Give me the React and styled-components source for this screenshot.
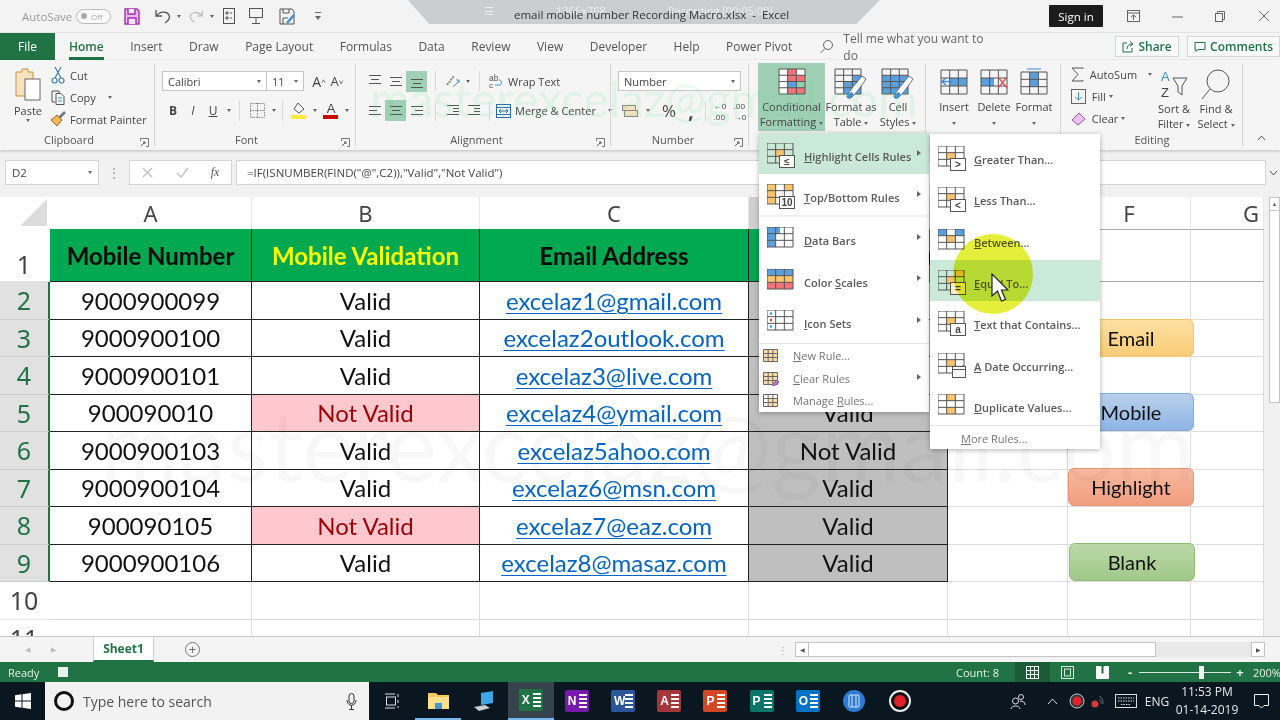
import React from 'react'
import styled, { createGlobalStyle } from 'styled-components'

const UI = `"Open Sans", "Liberation Sans", sans-serif`
const CELL = `Lato, "Liberation Sans", sans-serif`

const GlobalStyle = createGlobalStyle`
  html, body { margin: 0; padding: 0; background: #fff; }
  body { font-family: ${UI}; color: #444; overflow: hidden; }
  * { box-sizing: border-box; }
`

// ---- little drawings ----

const Grid = ({ w = 26, h = 20, cols = 3, rows = 3, fills = [], stroke = '#555', x = 0, y = 0 }) => {
  const lines = []
  for (let i = 0; i <= cols; i++) lines.push(<line key={'c' + i} x1={x + (w * i) / cols} x2={x + (w * i) / cols} y1={y} y2={y + h} />)
  for (let i = 0; i <= rows; i++) lines.push(<line key={'r' + i} y1={y + (h * i) / rows} y2={y + (h * i) / rows} x1={x} x2={x + w} />)
  return (
    <g stroke={stroke} strokeWidth="1">
      {fills.map((f, i) => (
        <rect key={i} x={x + (w * f[0]) / cols} y={y + (h * f[1]) / rows} width={(w * f[2]) / cols} height={(h * f[3]) / rows} fill={f[4]} stroke="none" />
      ))}
      {lines}
    </g>
  )
}

const OR = '#fbc56d'
const BL = '#5b9fdc'
const PK = '#f2727a'

const MenuGlyph = ({ fills, badge, date }) => (
  <svg width="30" height="29" viewBox="0 0 30 29" fill="none">
    <Grid fills={fills} />
    {badge && <rect x="12.5" y="12.5" width="15" height="12" fill={badge.bg || '#fff'} stroke="#555" />}
    {badge && <text x="20" y="22" textAnchor="middle" fontSize="10" fontFamily="Liberation Sans" fill="#444">{badge.t}</text>}
    {date && <g stroke="#555"><rect x="14.5" y="13.5" width="13" height="11" fill="#fff" /><line x1="14.5" y1="16.5" x2="27.5" y2="16.5" /><line x1="17" y1="12" x2="17" y2="14" /><line x1="25" y1="12" x2="25" y2="14" /></g>}
  </svg>
)

const Tiny = ({ fills, extra }) => (
  <svg width="16" height="15" viewBox="0 0 16 15" fill="none">
    <Grid w={14} h={12} cols={3} rows={3} x={0.5} y={1.5} stroke="#666" fills={fills} />
    {extra}
  </svg>
)

const Brush = () => (
  <g>
    <path d="M13 28 C15 24 18 20 28 8 L32 11 C26 20 22 25 18 29 C16 31 13 30 13 28 Z" fill="#fff" stroke="#5f6f80" />
    <path d="M13 28 C15 25 17 24 18 24 L20 27 L17 30 C15 31 12 31 13 28 Z" fill="#3f8fd6" />
  </g>
)

const Lines = ({ rows }) => (
  <svg width="16" height="14" viewBox="0 0 16 14" stroke="#555" strokeWidth="1">
    {rows.map((r, i) => <line key={i} x1={r[0]} x2={r[1]} y1={r[2]} y2={r[2]} />)}
  </svg>
)

const Caret = styled.span`
  display: inline-block;
  width: 0;
  height: 0;
  border-left: 2.5px solid transparent;
  border-right: 2.5px solid transparent;
  border-top: 3px solid #666;
  margin-left: ${p => p.$ml || 0}px;
  vertical-align: middle;
`

const Launcher = () => (
  <svg width="9" height="9" viewBox="0 0 9 9" fill="none" stroke="#777">
    <path d="M.5 3V.5H8.5V8.5H6" />
    <path d="M1 8 5 4M3 4H5V6" stroke="#555" />
  </svg>
)

// ---- title bar ----

const TitleBar = styled.header`
  height: 32px;
  background: #f3f3f3;
  display: flex;
  align-items: center;
  position: relative;
  flex: none;
`
const AutoSave = styled.span`
  font-size: 11.5px;
  color: #9a9a9a;
  margin-left: 22px;
  width: 54px;
`
const Toggle = styled.span`
  width: 35px;
  height: 15px;
  border: 1px solid #bbb;
  border-radius: 8px;
  background: #fafafa;
  display: flex;
  align-items: center;
  gap: 4px;
  padding-left: 4px;
  font-size: 8px;
  color: #aaa;
  &::before { content: ''; width: 6px; height: 6px; border-radius: 50%; background: #aaa; }
`
const QuickSlot = styled.span`
  width: ${p => p.$w}px;
  display: flex;
  align-items: center;
  justify-content: center;
  flex: none;
`
const RecBar = styled.div`
  position: absolute;
  left: 408px;
  top: 0;
  width: 472px;
  height: 24px;
  background: #cbcdcf;
  clip-path: polygon(0 0, 100% 0, 95% 100%, 4.5% 100%);
  color: #ecedee;
  font-size: 11px;
  display: flex;
  align-items: flex-start;
  padding: 3px 0 0 76px;
  gap: 62px;
`
const DocTitle = styled.span`
  position: absolute;
  left: 514px;
  top: 7px;
  font-size: 11.5px;
  color: #333;
  white-space: nowrap;
`
const SignIn = styled.span`
  margin-left: auto;
  width: 54px;
  height: 22px;
  background: #1c1c1c;
  color: #fff;
  font-size: 11.5px;
  display: flex;
  align-items: center;
  justify-content: center;
  border-radius: 1px;
`
const WinBtn = styled.span`
  width: ${p => p.$w}px;
  display: flex;
  justify-content: center;
  flex: none;
`

// ---- tabs ----

const TabRow = styled.nav`
  height: 28px;
  background: #f5f5f5;
  display: flex;
  align-items: center;
  flex: none;
  border-top: 1px solid #e4e4e4;
`
const FileTab = styled.span`
  width: 55px;
  height: 100%;
  background: #217346;
  color: #fff;
  font-size: 12px;
  display: flex;
  align-items: center;
  justify-content: center;
`
const Tabs = styled.div`
  display: flex;
  gap: 26.5px;
  margin-left: 14px;
  height: 100%;
`
const Tab = styled.span`
  font-size: 12px;
  color: ${p => (p.$active ? '#217346' : '#555')};
  font-weight: ${p => (p.$active ? 600 : 400)};
  height: 100%;
  display: flex;
  align-items: center;
  white-space: nowrap;
  border-bottom: ${p => (p.$active ? '3px solid #217346' : 'none')};
  padding-top: ${p => (p.$active ? '3px' : 0)};
`
const TellMe = styled.span`
  margin-left: 27px;
  display: flex;
  align-items: center;
  gap: 9px;
  font-size: 12px;
  color: #666;
`
const PillBtn = styled.span`
  margin-left: ${p => p.$ml || 0}px;
  width: ${p => p.$w}px;
  height: 21px;
  border: 1px solid #cfd8d3;
  background: #fafafa;
  color: #217346;
  font-size: 12px;
  font-weight: 600;
  display: flex;
  align-items: center;
  justify-content: center;
  gap: 4px;
`

// ---- ribbon ----

const Ribbon = styled.section`
  height: 90px;
  background: #f5f5f5;
  display: flex;
  flex: none;
  position: relative;
  box-shadow: 0 1px 3px rgba(0, 0, 0, 0.22);
  z-index: 2;
`
const RibbonMark = styled.span`
  position: absolute;
  left: 370px;
  top: 10px;
  font: 400 48px ${CELL};
  color: rgba(90, 225, 130, 0.13);
  white-space: nowrap;
  pointer-events: none;
  z-index: 3;
`
const Group = styled.div`
  width: ${p => p.$w}px;
  flex: none;
  display: flex;
  flex-direction: column;
  position: relative;
  &::after {
    content: '';
    position: absolute;
    right: 0;
    top: 4px;
    bottom: 4px;
    width: 1px;
    background: #d6d6d6;
  }
`
const GroupBody = styled.div`
  flex: 1;
  display: flex;
  padding: ${p => p.$pad || '0'};
  min-height: 0;
`
const GroupLabel = styled.div`
  height: 18px;
  font-size: 11px;
  color: #555;
  text-align: center;
  flex: none;
  line-height: 16px;
  padding-right: ${p => p.$pr || 0}px;
`
const LaunchSpot = styled.span`
  position: absolute;
  right: 6px;
  bottom: 3px;
  line-height: 0;
`
const Stack = styled.div`
  display: flex;
  flex-direction: column;
  gap: ${p => p.$gap || 0}px;
`
const Row = styled.div`
  display: flex;
  align-items: center;
  height: ${p => p.$h || 21}px;
`
const PasteCol = styled.div`
  width: 42px;
  display: flex;
  flex-direction: column;
  align-items: center;
  font-size: 11px;
  padding-top: 2px;
  gap: 1px;
`
const MiniAction = styled.div`
  display: flex;
  align-items: center;
  height: 22px;
  font-size: 11px;
  color: #444;
  white-space: nowrap;
  gap: 3px;
`
const MiniIcon = styled.span`
  width: ${p => p.$w || 20}px;
  flex: none;
  display: flex;
  justify-content: center;
`
const SelectBox = styled.div`
  width: ${p => p.$w}px;
  height: 20px;
  background: #fff;
  border: 1px solid #c6c6c6;
  font-size: 11px;
  padding-left: 5px;
  display: flex;
  align-items: center;
  justify-content: space-between;
  padding-right: 5px;
  margin-left: -1px;
  color: #444;
`
const Slot = styled.span`
  width: ${p => p.$w || 20}px;
  height: 21px;
  flex: none;
  display: flex;
  align-items: center;
  justify-content: center;
  font-size: ${p => p.$fs || 12}px;
  font-weight: ${p => p.$fw || 400};
  font-style: ${p => (p.$it ? 'italic' : 'normal')};
  text-decoration: ${p => (p.$ul ? 'underline' : 'none')};
  background: ${p => (p.$on ? '#9fcfb4' : 'transparent')};
  color: #444;
`
const VBar = styled.span`
  width: 1px;
  height: 20px;
  background: #d8d8d8;
  margin: 0 ${p => p.$m || 4}px;
  flex: none;
`
const LargeBtn = styled.div`
  width: ${p => p.$w}px;
  height: 68px;
  flex: none;
  display: flex;
  flex-direction: column;
  align-items: center;
  background: ${p => (p.$on ? '#9fcfb4' : 'transparent')};
  font-size: 11px;
  line-height: 15px;
  color: #444;
  text-align: center;
  white-space: nowrap;
  padding-top: 5px;
  svg { flex: none; margin-bottom: 4px; }
`
const Collapse = styled.span`
  margin-left: auto;
  width: 37px;
  align-self: flex-end;
  padding-bottom: 9px;
  display: flex;
  justify-content: center;
`

// ---- formula bar ----

const FormulaWrap = styled.div`
  height: 47px;
  padding: 10px 0 12px 5px;
  background: #f1f1f1;
  display: flex;
  align-items: stretch;
  flex: none;
`
const NameBox = styled.div`
  width: 94px;
  background: #fff;
  border: 1px solid #d4d4d4;
  font-size: 11.5px;
  display: flex;
  align-items: center;
  justify-content: space-between;
  padding: 0 6px;
  color: #444;
`
const Dots = styled.span`
  width: 30px;
  display: flex;
  justify-content: center;
  align-items: center;
  color: #999;
  font-size: 12px;
  letter-spacing: 0;
`
const FxBox = styled.div`
  width: 103px;
  background: #fff;
  border: 1px solid #d4d4d4;
  display: flex;
  align-items: center;
  color: #bbb;
`
const FxSlot = styled.span`
  width: ${p => p.$w}px;
  display: flex;
  justify-content: center;
  font: italic 12px "Liberation Serif", serif;
  color: #555;
`
const FormulaInput = styled.div`
  margin-left: 4px;
  width: 1030px;
  background: #fff;
  border: 1px solid #d4d4d4;
  font-size: 11.5px;
  padding-left: 10px;
  display: flex;
  align-items: center;
  color: #444;
  white-space: nowrap;
`
const FormulaEnd = styled.span`
  flex: 1;
  display: flex;
  align-items: center;
  justify-content: center;
`

// ---- sheet ----

const SheetArea = styled.main`
  height: 439px;
  flex: none;
  display: flex;
  background: #fff;
  position: relative;
  overflow: hidden;
`
const SheetGrid = styled.div`
  width: 1264px;
  display: grid;
  grid-template-columns: 50px 202px 228px 269px 199px 120px 123px 73px;
  grid-template-rows: 32px 53px repeat(10, 37.5px);
  position: relative;
`
const Corner = styled.div`
  background: #fff;
  position: relative;
  &::after {
    content: '';
    position: absolute;
    left: 20px;
    top: 2px;
    width: 27px;
    height: 27px;
    background: #dcdcdc;
    clip-path: polygon(100% 0, 100% 100%, 0 100%);
  }
`
const ColHead = styled.div`
  font: 400 22px "Noto Sans", sans-serif;
  color: #444;
  background: ${p => (p.$sel ? '#d0d0d0' : '#fff')};
  display: flex;
  align-items: center;
  justify-content: center;
  border-right: 1px solid #e6e6e6;
`
const RowHead = styled.div`
  font: 400 25px "Noto Sans", sans-serif;
  color: ${p => (p.$sel ? '#217346' : '#444')};
  background: ${p => (p.$sel ? '#e1e1e1' : '#fff')};
  display: flex;
  align-items: ${p => (p.$low ? 'flex-end' : 'center')};
  justify-content: center;
  border-right: ${p => (p.$sel ? '2px solid #217346' : 'none')};
  border-bottom: 1px solid ${p => (p.$sel ? '#cfcfcf' : '#e6e6e6')};
  padding-right: ${p => (p.$sel ? '0' : '2px')};
`
const Cell = styled.div`
  font: 400 24px ${CELL};
  color: ${p => (p.$bad ? '#9c0006' : '#111')};
  background: ${p => (p.$bad ? '#ffc7ce' : p.$sel ? '#bfbfbf' : '#fff')};
  display: flex;
  align-items: center;
  justify-content: center;
  border-right: 1px solid #222;
  border-bottom: 1px solid #222;
  white-space: nowrap;
`
const HeadCell = styled(Cell)`
  font-weight: 700;
  background: #00a850;
  color: ${p => (p.$yellow ? '#ffff00' : '#0c0c0c')};
`
const MailLink = styled.span`
  color: #0563c1;
  text-decoration: underline;
  text-decoration-thickness: 1px;
  text-underline-offset: 3px;
`
const Blank = styled.div`
  border-right: 1px solid #dcdcdc;
  border-bottom: 1px solid ${p => (p.$dark ? '#aaa' : '#dcdcdc')};
  border-top: ${p => (p.$top ? '1px solid #aaa' : 'none')};
`
const Shape = styled.div`
  position: absolute;
  left: ${p => p.$x}px;
  top: ${p => p.$y}px;
  width: 126px;
  height: 38px;
  border-radius: 6px;
  border: 1px solid ${p => p.$line};
  background: linear-gradient(${p => p.$a}, ${p => p.$b});
  font: 400 20px ${CELL};
  color: #111;
  display: flex;
  align-items: center;
  justify-content: center;
`
const SheetMark = styled.span`
  position: absolute;
  left: 100px;
  top: 190px;
  font: 400 96px ${CELL};
  color: rgba(0, 0, 0, 0.028);
  white-space: nowrap;
  pointer-events: none;
`
const VScroll = styled.aside`
  width: 16px;
  flex: none;
  padding-left: 5px;
  display: flex;
  flex-direction: column;
  background: #f1f1f1;
`
const ScrollArrow = styled.span`
  height: 14px;
  background: #fff;
  border: 1px solid #c4c4c4;
  display: flex;
  align-items: center;
  justify-content: center;
  font-size: 6px;
  color: #666;
`
const VThumb = styled.span`
  height: 192px;
  background: #fff;
  border: 1px solid #c4c4c4;
  border-top: none;
`

// ---- conditional formatting menus ----

const Menu = styled.div`
  position: absolute;
  left: ${p => p.$x}px;
  top: ${p => p.$y}px;
  width: ${p => p.$w}px;
  height: ${p => p.$h}px;
  background: #fff;
  box-shadow: 0 1px 5px rgba(0, 0, 0, 0.3);
  z-index: 5;
  padding-top: ${p => p.$pt || 0}px;
`
const BigItem = styled.div`
  height: ${p => p.$h || 41.3}px;
  display: flex;
  align-items: center;
  padding: 6px 0 0 ${p => p.$pl}px;
  gap: ${p => p.$gap}px;
  font-size: 11px;
  font-weight: 600;
  color: #5a5a5a;
  white-space: nowrap;
  background: ${p => (p.$on ? '#cbe9d8' : 'transparent')};
  position: relative;
  border-bottom: ${p => (p.$line ? '2px solid #efefef' : 'none')};
  svg { flex: none; margin-top: 2px; }
`
const SmallItem = styled.div`
  height: 22.6px;
  display: flex;
  align-items: center;
  padding-left: 4px;
  gap: 14px;
  font-size: 11px;
  color: #757575;
  position: relative;
`
const Arrow = styled.span`
  position: absolute;
  right: 8px;
  top: 50%;
  margin-top: -4px;
  width: 0;
  height: 0;
  border-top: 3.5px solid transparent;
  border-bottom: 3.5px solid transparent;
  border-left: 4px solid #666;
`
const MenuRule = styled.div`
  height: 1px;
  background: #e6e6e6;
  margin: ${p => p.$m || '0'};
`
const MoreRules = styled.div`
  font-size: 11px;
  color: #757575;
  padding: 5px 0 0 31px;
`
const Spot = styled.div`
  position: absolute;
  left: 953px;
  top: 234px;
  width: 80px;
  height: 80px;
  border-radius: 50%;
  background: #e6ee3c;
  mix-blend-mode: multiply;
  z-index: 6;
  pointer-events: none;
`
const Pointer = styled.svg`
  position: absolute;
  left: 991px;
  top: 273px;
  z-index: 7;
`

// ---- sheet tabs / status / taskbar ----

const SheetTabs = styled.div`
  height: 26px;
  flex: none;
  background: #f4f4f4;
  border-top: 1px solid #c8c8c8;
  display: flex;
  align-items: center;
`
const NavArrow = styled.span`
  width: 26px;
  color: #bbb;
  font-size: 7px;
  text-align: center;
  margin-left: ${p => p.$ml || 0}px;
`
const SheetTab = styled.span`
  width: 61px;
  height: 100%;
  margin-left: 27px;
  background: #fff;
  color: #217346;
  font-size: 12px;
  font-weight: 700;
  display: flex;
  align-items: center;
  justify-content: center;
  border-left: 1px solid #ccc;
  border-right: 1px solid #ccc;
  border-bottom: 2px solid #217346;
  margin-top: -1px;
`
const AddSheet = styled.span`
  margin-left: 31px;
  width: 15px;
  height: 15px;
  border: 1px solid #777;
  border-radius: 50%;
  display: flex;
  align-items: center;
  justify-content: center;
  font-size: 13px;
  line-height: 1;
  color: #666;
`
const HScrollWrap = styled.div`
  margin-left: auto;
  width: 510px;
  display: flex;
  align-items: center;
  height: 15px;
  padding-right: 15px;
`
const Grip = styled.span`
  width: 25px;
  color: #aaa;
  text-align: center;
  font-size: 10px;
`
const HTrack = styled.div`
  flex: 1;
  height: 15px;
  display: flex;
  background: #e9e9e9;
`
const HBtn = styled.span`
  width: 14px;
  height: 15px;
  background: #fff;
  border: 1px solid #c4c4c4;
  font-size: 6px;
  color: #555;
  display: flex;
  align-items: center;
  justify-content: center;
  flex: none;
`
const HThumb = styled.span`
  width: 347px;
  background: #fff;
  border: 1px solid #c4c4c4;
  border-left: none;
`
const HRest = styled.span`
  flex: 1;
`
const StatusBar = styled.footer`
  height: 20px;
  flex: none;
  background: #217346;
  color: #e6efe9;
  font-size: 11px;
  display: flex;
  align-items: center;
  padding-left: 8px;
`
const MacroBox = styled.span`
  width: 10px;
  height: 10px;
  background: #e8f1ec;
  margin-left: 19px;
`
const CountText = styled.span`
  margin-left: auto;
  margin-right: 16px;
`
const ViewBtn = styled.span`
  width: ${p => p.$w || 35}px;
  height: 100%;
  display: flex;
  align-items: center;
  justify-content: center;
  background: ${p => (p.$on ? '#1a5c38' : 'transparent')};
`
const ZoomSlider = styled.span`
  width: 92px;
  height: 1px;
  background: #dfe9e3;
  position: relative;
  margin: 0 5px;
  &::before {
    content: '';
    position: absolute;
    left: 60px;
    top: -6px;
    width: 5px;
    height: 13px;
    background: #eef4f0;
  }
`
const ZoomSign = styled.span`
  width: 8px;
  text-align: center;
  font-size: 13px;
  font-weight: 700;
  line-height: 1;
`
const ZoomVal = styled.span`
  width: 27px;
  margin-left: 9px;
  white-space: nowrap;
`
const Taskbar = styled.div`
  height: 38px;
  flex: none;
  background: #0a1721;
  display: flex;
  align-items: center;
  color: #e8e8e8;
`
const StartBtn = styled.span`
  width: 45px;
  display: flex;
  justify-content: center;
`
const SearchBox = styled.div`
  width: 324px;
  height: 100%;
  background: #f2f2f2;
  display: flex;
  align-items: center;
  padding: 0 12px 0 9px;
  font-size: 14px;
  color: #555;
`
const Cortana = styled.span`
  width: 20px;
  height: 20px;
  border: 3px solid #111;
  border-radius: 50%;
  margin-right: 9px;
  flex: none;
`
const TaskSlot = styled.span`
  width: 46.2px;
  height: 100%;
  flex: none;
  display: flex;
  align-items: center;
  justify-content: center;
  background: ${p => (p.$active ? '#37434c' : 'transparent')};
  border-bottom: ${p => (p.$open ? '2px solid #76b9ed' : 'none')};
`
const AppTile = styled.span`
  width: 24px;
  height: 22px;
  border-radius: 2px;
  display: flex;
  background: ${p => p.$bg};
  overflow: hidden;
  font: 700 12px "Liberation Sans", sans-serif;
  color: #fff;
  align-items: center;
  padding-left: 3px;
  position: relative;
  &::after {
    content: '';
    position: absolute;
    right: 2px;
    top: 4px;
    width: 8px;
    height: 14px;
    background: repeating-linear-gradient(#fff 0 2px, ${p => p.$bg} 2px 4px);
  }
`
const Tray = styled.div`
  margin-left: auto;
  display: flex;
  align-items: center;
  height: 100%;
`
const TraySlot = styled.span`
  width: ${p => p.$w}px;
  flex: none;
  display: flex;
  justify-content: center;
  align-items: center;
  font-size: ${p => p.$fs || 12}px;
`
const Clock = styled.span`
  width: 70px;
  flex: none;
  text-align: center;
  font-size: 12px;
  line-height: 18px;
`

const Root = styled.div`
  width: 1280px;
  height: 720px;
  display: flex;
  flex-direction: column;
  overflow: hidden;
  position: relative;
`

// ---- data ----

const rows = [
  ['9000900099', 'Valid', 'excelaz1@gmail.com', 'Valid'],
  ['9000900100', 'Valid', 'excelaz2outlook.com', 'Not Valid'],
  ['9000900101', 'Valid', 'excelaz3@live.com', 'Valid'],
  ['900090010', 'Not Valid', 'excelaz4@ymail.com', 'Valid'],
  ['9000900103', 'Valid', 'excelaz5ahoo.com', 'Not Valid'],
  ['9000900104', 'Valid', 'excelaz6@msn.com', 'Valid'],
  ['900090105', 'Not Valid', 'excelaz7@eaz.com', 'Valid'],
  ['9000900106', 'Valid', 'excelaz8@masaz.com', 'Valid'],
]

const shapes = [
  { t: 'Email', x: 1068, y: 122, a: '#fde0a4', b: '#fbcc77', line: '#f3c46a' },
  { t: 'Mobile', x: 1068, y: 196, a: '#b9d0ee', b: '#8fb4e3', line: '#84a9d8' },
  { t: 'Highlight', x: 1068, y: 271, a: '#f8b9a0', b: '#f29e80', line: '#ea9477' },
  { t: 'Blank', x: 1069, y: 346, a: '#b9d8a6', b: '#a1c88a', line: '#8cbb73' },
]

const leftMenu = [
  { l: <><u>H</u>ighlight Cells Rules</>, on: true, f: [[1, 1, 1, 1, OR], [2, 0, 0, 0, OR]], b: { t: '≤' } },
  { l: <><u>T</u>op/Bottom Rules</>, line: true, f: [[0, 0, 1, 3, OR], [2, 0, 1, 1, OR]], b: { t: '10' } },
  { l: <><u>D</u>ata Bars</>, f: [[0, 0, 1, 3, BL], [1, 0, 0.5, 1, BL]] },
  { l: <>Color <u>S</u>cales</>, f: [[0, 0, 3, 1, BL], [0, 1, 3, 1, OR], [0, 2, 3, 1, PK]] },
  { l: <><u>I</u>con Sets</>, icons: true, f: [] },
]

const rightMenu = [
  { l: <><u>G</u>reater Than...</>, f: [[1, 1, 1, 1, OR]], b: { t: '>' } },
  { l: <><u>L</u>ess Than...</>, f: [[1, 1, 1, 1, OR]], b: { t: '<' } },
  { l: <><u>B</u>etween...</>, f: [[0, 0, 1, 1, BL], [2, 0, 1, 1, BL], [1, 1, 1, 1, OR]] },
  { l: <><u>E</u>qual To...</>, on: true, f: [[1, 1, 1, 1, OR], [2, 0, 1, 1, OR]], b: { t: '=', bg: '#f9edc6' } },
  { l: <><u>T</u>ext that Contains...</>, f: [[1, 1, 1, 1, OR]], b: { t: 'a' } },
  { l: <><u>A</u> Date Occurring...</>, f: [[1, 1, 1, 1, OR]], date: true },
  { l: <><u>D</u>uplicate Values...</>, f: [[1, 0, 1, 1, OR], [1, 2, 1, 1, OR]] },
]

const tabs = ['Insert', 'Draw', 'Page Layout', 'Formulas', 'Data', 'Review', 'View', 'Developer', 'Help', 'Power Pivot']

const tiles = [
  ['#7719aa', 'N'], ['#2b579a', 'W'], ['#a4373a', 'A'], ['#d24726', 'P'], ['#077568', 'P'], ['#0072c6', 'O'],
]

const App = () => {
  return (
    <Root>
      <GlobalStyle />

      <TitleBar>
        <AutoSave>AutoSave</AutoSave>
        <Toggle>Off</Toggle>
        <QuickSlot $w="42px" style={{ width: 42 }}>
          <svg width="16" height="17" viewBox="0 0 16 17" fill="#e9b6ee" stroke="#a12fb0" strokeWidth="1.4">
            <path d="M1 1H13L15 3V16H1Z" />
            <path d="M4 1V6H11V1M4 16V10H12V16" fill="#f6e3f8" />
          </svg>
        </QuickSlot>
        <QuickSlot $w={20}>
          <svg width="18" height="16" viewBox="0 0 18 16" fill="none" stroke="#555" strokeWidth="1.3"><path d="M2 2V8H8M2 8C6 3 13 3 15 7 16.500 10 14 13 11 15" /></svg>
        </QuickSlot>
        <QuickSlot $w={12}><Caret /></QuickSlot>
        <QuickSlot $w={22}>
          <svg width="16" height="16" viewBox="0 0 18 16" fill="none" stroke="#bbb" strokeWidth="1.3"><path d="M16 2V8H10M16 8C12 3 5 3 3 7 1.500 10 4 13 7 15" /></svg>
        </QuickSlot>
        <QuickSlot $w={10}><Caret /></QuickSlot>
        <QuickSlot $w={24}>
          <svg width="12" height="16" viewBox="0 0 12 16" fill="none" stroke="#555"><rect x=".5" y=".5" width="11" height="15" /><path d="M3 4H5V6H3ZM3 9H5V11H3ZM7 5H9M7 10H9" /></svg>
        </QuickSlot>
        <QuickSlot $w={30}>
          <svg width="16" height="17" viewBox="0 0 16 17" fill="none" stroke="#555"><rect x="1.500" y=".5" width="13" height="9" /><path d="M8 10V15M4 15.500H12" /></svg>
        </QuickSlot>
        <QuickSlot $w={32}>
          <svg width="17" height="17" viewBox="0 0 17 17" fill="none" stroke="#555"><path d="M1 1H13L15 3V16H1Z" /><path d="M4 1V5H10V1M4 16V10H9" /><path d="M8 15 15 7" stroke="#3f8fd6" strokeWidth="2.5" /></svg>
        </QuickSlot>
        <QuickSlot $w={30}>
          <svg width="8" height="9" viewBox="0 0 8 9" fill="#666"><rect x="1" y="0" width="6" height="1" /><path d="M1 4H7L4 8Z" /></svg>
        </QuickSlot>
        <RecBar><span>☰</span><span>1366x768</span><span>Recording [00:05:00]</span></RecBar>
        <DocTitle>email mobile number Recording Macro.xlsx&nbsp; -&nbsp; Excel</DocTitle>
        <SignIn>Sign in</SignIn>
        <WinBtn $w={60}>
          <svg width="13" height="12" viewBox="0 0 13 12" fill="none" stroke="#666"><rect x=".5" y=".5" width="12" height="11" /><path d="M.5 3H12.500M6.500 10V5M4 7 6.500 5 9 7" /></svg>
        </WinBtn>
        <WinBtn $w={29}><svg width="11" height="11"><line x1="0" x2="11" y1="6" y2="6" stroke="#666" /></svg></WinBtn>
        <WinBtn $w={55}><svg width="10" height="11" viewBox="0 0 10 11" fill="none" stroke="#666"><rect x=".5" y="2.500" width="7" height="8" /><path d="M2.500 2.500V.5H9.500V8.500H7.500" /></svg></WinBtn>
        <WinBtn $w={33}><svg width="12" height="12" stroke="#666"><path d="M1 1 11 11M11 1 1 11" /></svg></WinBtn>
      </TitleBar>

      <TabRow>
        <FileTab>File</FileTab>
        <Tabs>
          <Tab $active>Home</Tab>
          {tabs.map(t => <Tab key={t}>{t}</Tab>)}
        </Tabs>
        <TellMe>
          <svg width="15" height="15" viewBox="0 0 15 15" fill="none" stroke="#666"><circle cx="9" cy="6" r="4.500" /><path d="M6 9.500 1.500 14" /></svg>
          Tell me what you want to do
        </TellMe>
        <PillBtn $ml={114} $w={64}>
          <svg width="12" height="12" viewBox="0 0 12 12" fill="none" stroke="#217346"><path d="M5 2H1V11H10V7M5 8C5 5 7 3 10 3M8 .5 11 3 8 5.500" /></svg>
          Share
        </PillBtn>
        <PillBtn $ml={8} $w={93}>
          <svg width="12" height="12" viewBox="0 0 12 12" fill="none" stroke="#217346"><path d="M1 1.500H11V8.500H4L2 10.500V8.500H1Z" /></svg>
          Comments
        </PillBtn>
      </TabRow>

      <Ribbon>
        <RibbonMark>masterexcelaz@gmail.com</RibbonMark>

        <Group $w={155}>
          <GroupBody $pad="4px 0 0 7px">
            <PasteCol>
              <svg width="28" height="36" viewBox="0 0 28 36" fill="none">
                <path d="M2 6H8V3H14V6H19V30H2Z" fill="#f6e2bd" stroke="#c9923a" />
                <rect x="11" y="13" width="15" height="21" fill="#fff" stroke="#666" />
              </svg>
              <span>Paste</span>
              <Caret />
            </PasteCol>
            <Stack style={{ marginLeft: 0 }}>
              <MiniAction>
                <MiniIcon $w={18}><svg width="14" height="18" viewBox="0 0 14 18" fill="none" stroke="#3f7fb5" strokeWidth="1.200"><path d="M4 1 10 12M10 1 4 12" /><circle cx="3.500" cy="14.500" r="2.500" /><circle cx="10.500" cy="14.500" r="2.500" /></svg></MiniIcon>
                Cut
              </MiniAction>
              <MiniAction>
                <MiniIcon $w={18}><svg width="15" height="15" viewBox="0 0 15 15" fill="none" stroke="#555"><path d="M4 12H1V1H8V3" /><path d="M5 3.500H10L13 6.500V14.500H5Z" /><path d="M7 8H11M7 11H11" stroke="#3f8fd6" /></svg></MiniIcon>
                Copy <Caret $ml={9} />
              </MiniAction>
              <MiniAction>
                <MiniIcon $w={18}><svg width="16" height="16" viewBox="0 0 16 16" fill="none"><path d="M15 1 9 7" stroke="#6a7784" strokeWidth="2.500" /><path d="M7 4 12 9 7 15 1 9Z" fill="#f0b65a" stroke="#99682a" /></svg></MiniIcon>
                Format Painter
              </MiniAction>
            </Stack>
          </GroupBody>
          <GroupLabel $pr={17}>Clipboard</GroupLabel>
          <LaunchSpot><Launcher /></LaunchSpot>
        </Group>

        <Group $w={201}>
          <GroupBody $pad="11px 0 0 8px">
            <Stack $gap={9}>
              <Row $h={20}>
                <SelectBox $w={105}>Calibri <Caret /></SelectBox>
                <SelectBox $w={38}>11 <Caret /></SelectBox>
                <Slot $w={18} $fs={14} style={{ marginLeft: 6 }}>A<sup style={{ fontSize: 8 }}>^</sup></Slot>
                <Slot $w={18} $fs={13}>A<sup style={{ fontSize: 8 }}>˅</sup></Slot>
              </Row>
              <Row>
                <Slot $w={20} $fw={700}>B</Slot>
                <Slot $w={20} $it>I</Slot>
                <Slot $w={20} $ul>U</Slot>
                <Slot $w={12}><Caret /></Slot>
                <VBar $m={4} />
                <Slot $w={26}><svg width="15" height="15" stroke="#888" strokeDasharray="1.500 1" fill="none"><rect x=".5" y=".5" width="14" height="14" /><path d="M7.500 0V15M0 7.500H15" /></svg></Slot>
                <Slot $w={8}><Caret /></Slot>
                <VBar $m={4} />
                <Slot $w={24}><svg width="16" height="17" viewBox="0 0 16 17" fill="none"><path d="M7 1 13 7 8 11 3 7Z" stroke="#555" /><rect x="0" y="13" width="15" height="4" fill="#ffeb3b" /></svg></Slot>
                <Slot $w={8}><Caret /></Slot>
                <Slot $w={24}><svg width="16" height="17" viewBox="0 0 16 17"><text x="8" y="11" fontSize="13" textAnchor="middle" fill="#444" fontFamily="Liberation Sans">A</text><rect x="0" y="13" width="15" height="4" fill="#c00" /></svg></Slot>
                <Slot $w={8}><Caret /></Slot>
              </Row>
            </Stack>
          </GroupBody>
          <GroupLabel $pr={18}>Font</GroupLabel>
          <LaunchSpot><Launcher /></LaunchSpot>
        </Group>

        <Group $w={255}>
          <GroupBody $pad="11px 0 0 8px">
            <Stack $gap={9}>
              <Row $h={20}>
                <Slot $w={21}><Lines rows={[[2, 14, 1.500], [4, 12, 5.500], [2, 14, 9.500]]} /></Slot>
                <Slot $w={21}><Lines rows={[[2, 14, 3.500], [4, 12, 7.500], [2, 14, 11.500]]} /></Slot>
                <Slot $w={21} $on><Lines rows={[[2, 14, 5.500], [4, 12, 9.500], [2, 14, 13.500]]} /></Slot>
                <VBar $m={8} />
                <Slot $w={20} $fs={11} style={{ marginLeft: -1 }}>
                  <svg width="16" height="16" viewBox="0 0 16 16" fill="none"><path d="M2 12 9 3" stroke="#888" strokeDasharray="2 1" strokeWidth="2" /><path d="M8 14 14 8M11 7H14V10" stroke="#3f8fd6" /></svg>
                </Slot>
                <Slot $w={9}><Caret /></Slot>
                <VBar $m={7} />
                <MiniIcon $w={18}><svg width="16" height="16" viewBox="0 0 16 16"><text x="1" y="8" fontSize="8.500" fill="#555" fontFamily="Liberation Sans">ab</text><text x="1" y="15" fontSize="8" fill="#555" fontFamily="Liberation Sans">c</text><path d="M7 12H12C14 12 14 7 11 7" stroke="#3f8fd6" fill="none" /></svg></MiniIcon>
                <MiniAction style={{ marginLeft: 3 }}>Wrap Text</MiniAction>
              </Row>
              <Row>
                <Slot $w={21}><Lines rows={[[2, 14, 2.500], [2, 10, 6.500], [2, 14, 10.500]]} /></Slot>
                <Slot $w={21} $on><Lines rows={[[2, 14, 2.500], [4, 12, 6.500], [2, 14, 10.500]]} /></Slot>
                <Slot $w={21}><Lines rows={[[2, 14, 2.500], [6, 14, 6.500], [2, 14, 10.500]]} /></Slot>
                <VBar $m={8} />
                <Slot $w={20} style={{ marginLeft: -1 }}><Lines rows={[[2, 14, 1.500], [8, 14, 4.500], [8, 14, 7.500], [2, 14, 10.500]]} /></Slot>
                <Slot $w={22}><Lines rows={[[2, 14, 1.500], [8, 14, 4.500], [8, 14, 7.500], [2, 14, 10.500]]} /></Slot>
                <VBar $m={4} />
                <MiniIcon $w={18}><svg width="15" height="14" viewBox="0 0 15 14" fill="none" stroke="#2b6ea6"><rect x=".5" y=".5" width="14" height="13" /><path d="M0 3.500H15M0 10.500H15M3 7H12M5 5 3 7 5 9M10 5 12 7 10 9" /></svg></MiniIcon>
                <MiniAction style={{ marginLeft: 3 }}>Merge &amp; Center <Caret $ml={9} /></MiniAction>
              </Row>
            </Stack>
          </GroupBody>
          <GroupLabel $pr={14}>Alignment</GroupLabel>
          <LaunchSpot><Launcher /></LaunchSpot>
        </Group>

        <Group $w={138}>
          <GroupBody $pad="11px 0 0 8px">
            <Stack $gap={9}>
              <Row $h={20}>
                <SelectBox $w={123}>Number <Caret /></SelectBox>
              </Row>
              <Row>
                <Slot $w={22}><svg width="16" height="14" viewBox="0 0 16 14" fill="#f6e2bd" stroke="#888"><rect x=".5" y="1.500" width="13" height="5" /><rect x="2.500" y="6.500" width="13" height="6" /></svg></Slot>
                <Slot $w={14}><Caret /></Slot>
                <Slot $w={24} $fs={17} style={{ marginLeft: 2 }}>%</Slot>
                <Slot $w={20} $fs={19} $fw={700}>,</Slot>
                <VBar $m={4} />
                <Slot $w={20} $fs={8}>←0<br />.00</Slot>
                <Slot $w={20} $fs={8}>.00<br />→0</Slot>
              </Row>
            </Stack>
          </GroupBody>
          <GroupLabel $pr={14}>Number</GroupLabel>
          <LaunchSpot><Launcher /></LaunchSpot>
        </Group>

        <Group $w={177}>
          <GroupBody $pad="3px 0 0 9px">
            <LargeBtn $w={67} $on>
              <svg width="28" height="27" viewBox="0 0 28 27" fill="#fff"><Grid w={26} h={25} cols={3} rows={4} x={1} y={1} stroke="#555" fills={[[0, 0, 3, 1, '#fff'], [1, 0, 1, 1, PK], [0, 0, 1, 4, '#fff'], [1, 1, 2, 1, PK], [1, 2, 1, 1, BL], [1, 3, 2, 1, PK]]} /></svg>
              <span>Conditional</span>
              <span>Formatting <Caret /></span>
            </LargeBtn>
            <LargeBtn $w={52}>
              <svg width="34" height="32" viewBox="0 0 34 32" fill="none"><Grid w={26} h={25} cols={3} rows={4} x={1} y={1} stroke="#555" fills={[[1, 2, 2, 2, BL], [2, 1, 1, 1, BL]]} /><Brush /></svg>
              <span style={{ marginTop: -5 }}>Format as</span>
              <span>Table <Caret /></span>
            </LargeBtn>
            <LargeBtn $w={42}>
              <svg width="34" height="32" viewBox="0 0 34 32" fill="none"><Grid w={26} h={25} cols={3} rows={4} x={1} y={1} stroke="#555" fills={[[0, 1, 3, 3, BL]]} /><Brush /></svg>
              <span style={{ marginTop: -5 }}>Cell</span>
              <span>Styles <Caret /></span>
            </LargeBtn>
          </GroupBody>
        </Group>

        <Group $w={135}>
          <GroupBody $pad="3px 0 0 8px">
            <LargeBtn $w={40}>
              <svg width="30" height="27" viewBox="0 0 30 27" fill="none"><Grid w={26} h={24} cols={3} rows={3} x={2} y={2} stroke="#555" fills={[[1, 1, 2, 1, BL]]} /><path d="M13 13.500H3M7 10 3 13.500 7 17" stroke="#3f8fd6" strokeWidth="1.500" /></svg>
              <span>Insert</span>
              <span><Caret /></span>
            </LargeBtn>
            <LargeBtn $w={40}>
              <svg width="30" height="27" viewBox="0 0 30 27" fill="none"><Grid w={26} h={24} cols={3} rows={3} x={2} y={2} stroke="#555" fills={[[0, 1, 1.500, 1, BL]]} /><path d="M19 9 28 20M28 9 19 20" stroke="#e3555a" strokeWidth="1.500" /></svg>
              <span>Delete</span>
              <span><Caret /></span>
            </LargeBtn>
            <LargeBtn $w={40}>
              <svg width="30" height="27" viewBox="0 0 30 27" fill="none"><Grid w={26} h={22} cols={3} rows={3} x={2} y={4} stroke="#555" fills={[[1, 0, 1, 2, BL]]} /><path d="M8 1H22" stroke="#3f8fd6" /></svg>
              <span>Format</span>
              <span><Caret /></span>
            </LargeBtn>
          </GroupBody>
        </Group>

        <Group $w={182}>
          <GroupBody $pad="3px 0 0 10px">
            <Stack style={{ width: 82, paddingTop: 0 }}>
              <MiniAction><svg width="13" height="15" viewBox="0 0 13 15" fill="none" stroke="#555"><path d="M12 2V1H1L7 7.500 1 14H12V13" /></svg>&nbsp;AutoSum <Caret $ml={8} /></MiniAction>
              <MiniAction><svg width="15" height="15" viewBox="0 0 15 15" fill="none" stroke="#666"><rect x=".5" y=".5" width="14" height="14" /><path d="M7.500 3V11M4 8 7.500 11 11 8" stroke="#3f8fd6" /></svg>&nbsp;Fill <Caret /></MiniAction>
              <MiniAction><svg width="15" height="15" viewBox="0 0 15 15" fill="#e7c5ef" stroke="#9a4fb0"><path d="M1 9 8 2 14 8 7 14Z" /></svg>&nbsp;Clear <Caret /></MiniAction>
            </Stack>
            <LargeBtn $w={42}>
              <svg width="28" height="32" viewBox="0 0 28 32" fill="none"><text x="1" y="13" fontSize="13" fontFamily="Liberation Sans" fill="#3f8fd6">A</text><text x="1" y="29" fontSize="13" fontFamily="Liberation Sans" fill="#444">Z</text><path d="M13 10H27L22 18V27L18 24V18Z" stroke="#555" /></svg>
              <span style={{ marginTop: -3 }}>Sort &amp;</span>
              <span>Filter <Caret /></span>
            </LargeBtn>
            <LargeBtn $w={42}>
              <svg width="30" height="32" viewBox="0 0 30 32" fill="none" stroke="#555"><circle cx="17" cy="13" r="11" /><path d="M9 21 1 31" /></svg>
              <span style={{ marginTop: -3 }}>Find &amp;</span>
              <span>Select <Caret /></span>
            </LargeBtn>
          </GroupBody>
          <GroupLabel>Editing</GroupLabel>
        </Group>

        <Collapse>
          <svg width="9" height="6" fill="none" stroke="#555"><path d="M1 5 4.500 1 8 5" /></svg>
        </Collapse>
      </Ribbon>

      <FormulaWrap>
        <NameBox>D2 <Caret /></NameBox>
        <Dots>⋮</Dots>
        <FxBox>
          <FxSlot $w={34}><svg width="11" height="11" stroke="#c4c4c4" strokeWidth="1.500"><path d="M1 1 10 10M10 1 1 10" /></svg></FxSlot>
          <FxSlot $w={36}><svg width="13" height="11" fill="none" stroke="#c4c4c4" strokeWidth="1.500"><path d="M1 6 5 10 12 1" /></svg></FxSlot>
          <FxSlot $w={30}>fx</FxSlot>
        </FxBox>
        <FormulaInput>{'=IF(ISNUMBER(FIND("@",C2)),"Valid","Not Valid")'}</FormulaInput>
        <FormulaEnd><svg width="9" height="6" fill="none" stroke="#555"><path d="M1 1 4.500 5 8 1" /></svg></FormulaEnd>
      </FormulaWrap>

      <SheetArea>
        <SheetGrid>
          <Corner />
          <ColHead>A</ColHead>
          <ColHead>B</ColHead>
          <ColHead>C</ColHead>
          <ColHead $sel>D</ColHead>
          <ColHead>E</ColHead>
          <ColHead>F</ColHead>
          <ColHead style={{ justifyContent: 'flex-end', paddingRight: 4 }}>G</ColHead>

          <RowHead $low>1</RowHead>
          <HeadCell>Mobile Number</HeadCell>
          <HeadCell $yellow>Mobile Validation</HeadCell>
          <HeadCell>Email Address</HeadCell>
          <HeadCell>Email Validation</HeadCell>
          <Blank $top $dark />
          <Blank $top $dark />
          <Blank $top $dark />

          {rows.map((r, i) => (
            <React.Fragment key={r[2]}>
              <RowHead $sel>{i + 2}</RowHead>
              <Cell>{r[0]}</Cell>
              <Cell $bad={r[1] === 'Not Valid'}>{r[1]}</Cell>
              <Cell><MailLink>{r[2]}</MailLink></Cell>
              <Cell $sel>{r[3]}</Cell>
              <Blank />
              <Blank />
              <Blank />
            </React.Fragment>
          ))}

          {[10, 11].map(n => (
            <React.Fragment key={n}>
              <RowHead>{n}</RowHead>
              {[0, 1, 2, 3, 4, 5, 6].map(c => <Blank key={c} />)}
            </React.Fragment>
          ))}

          {shapes.map(s => (
            <Shape key={s.t} $x={s.x} $y={s.y} $a={s.a} $b={s.b} $line={s.line}>{s.t}</Shape>
          ))}
          <SheetMark>masterexcelaz@gmail.com</SheetMark>
        </SheetGrid>
        <VScroll>
          <ScrollArrow>▲</ScrollArrow>
          <VThumb />
        </VScroll>
      </SheetArea>

      <SheetTabs>
        <NavArrow $ml={14}>◀</NavArrow>
        <NavArrow>▶</NavArrow>
        <SheetTab>Sheet1</SheetTab>
        <AddSheet>+</AddSheet>
        <HScrollWrap>
          <Grip>⋮</Grip>
          <HTrack>
            <HBtn>◀</HBtn>
            <HThumb />
            <HRest />
            <HBtn>▶</HBtn>
          </HTrack>
        </HScrollWrap>
      </SheetTabs>

      <StatusBar>
        <span>Ready</span>
        <MacroBox />
        <CountText>Count: 8</CountText>
        <ViewBtn $on>
          <svg width="13" height="13" fill="none" stroke="#fff"><rect x=".5" y=".5" width="12" height="12" /><path d="M4.500 0V13M8.500 0V13M0 4.500H13M0 8.500H13" /></svg>
        </ViewBtn>
        <ViewBtn>
          <svg width="13" height="13" fill="none" stroke="#dfe9e3"><rect x=".5" y=".5" width="12" height="12" /><rect x="3.500" y="3" width="6" height="7" /></svg>
        </ViewBtn>
        <ViewBtn>
          <svg width="13" height="13" fill="#fff" stroke="#fff"><path d="M.5 .5H5V8H8V.5H12.500V12.500H.5Z" /></svg>
        </ViewBtn>
        <ZoomSign style={{ marginLeft: 6 }}>-</ZoomSign>
        <ZoomSlider />
        <ZoomSign>+</ZoomSign>
        <ZoomVal>200%</ZoomVal>
      </StatusBar>

      <Taskbar>
        <StartBtn>
          <svg width="16" height="16" viewBox="0 0 16 16" fill="#fff"><path d="M0 2.200 6.500 1.300V7.500H0ZM7.500 1.200 16 0V7.500H7.500ZM0 8.500H6.500V14.700L0 13.800ZM7.500 8.500H16V16L7.500 14.800Z" /></svg>
        </StartBtn>
        <SearchBox>
          <Cortana />
          Type here to search
          <svg style={{ marginLeft: 'auto' }} width="11" height="17" viewBox="0 0 11 17" fill="none" stroke="#333"><rect x="3" y=".5" width="5" height="10" rx="2.500" /><path d="M1 7C1 14 10 14 10 7M5.500 12V16M3 16.500H8" /></svg>
        </SearchBox>
        <TaskSlot>
          <svg width="16" height="16" viewBox="0 0 16 16" fill="none" stroke="#ddd"><path d="M1 1H11M1 15H11" /><rect x="2.500" y="4" width="9" height="8" /><path d="M14 1V4M14 7V10M14 13V15" /></svg>
        </TaskSlot>
        <TaskSlot $open>
          <svg width="21" height="18" viewBox="0 0 21 18"><path d="M0 2H8L10 4H21V17H0Z" fill="#f5c95c" /><rect x="0" y="6" width="21" height="12" fill="#fce08b" /><rect x="7" y="12" width="7" height="6" fill="#3a9ad9" /></svg>
        </TaskSlot>
        <TaskSlot>
          <svg width="22" height="20" viewBox="0 0 22 20"><path d="M8 2 20 0V12L8 14Z" fill="#3fa5e6" /><path d="M1 16 12 14 17 17 6 20Z" fill="#ccc" /></svg>
        </TaskSlot>
        <TaskSlot $active $open>
          <AppTile $bg="#217346">X</AppTile>
        </TaskSlot>
        {tiles.map((t, i) => (
          <TaskSlot key={i}><AppTile $bg={t[0]}>{t[1]}</AppTile></TaskSlot>
        ))}
        <TaskSlot>
          <svg width="22" height="22" viewBox="0 0 22 22"><circle cx="11" cy="11" r="11" fill="#2d7bd1" /><rect x="6" y="5" width="10" height="12" rx="1" fill="none" stroke="#d7e8fa" /><path d="M9 5V17M13 5V17" stroke="#d7e8fa" /></svg>
        </TaskSlot>
        <TaskSlot>
          <svg width="22" height="22" viewBox="0 0 22 22"><circle cx="11" cy="11" r="10" fill="#111" stroke="#eee" strokeWidth="2" /><circle cx="11" cy="11" r="6" fill="#e0202a" /></svg>
        </TaskSlot>
        <Tray>
          <TraySlot $w={36}><svg width="17" height="17" viewBox="0 0 17 17" fill="none" stroke="#ddd"><circle cx="5.500" cy="8" r="3" /><path d="M1 16C1 12 10 12 10 16" /><circle cx="11" cy="4" r="2.500" /><path d="M10 8C13 8 15 9 15 12" /></svg></TraySlot>
          <TraySlot $w={32}><svg width="11" height="7" fill="none" stroke="#ddd"><path d="M1 6 5.500 1 10 6" /></svg></TraySlot>
          <TraySlot $w={18}><svg width="16" height="16"><circle cx="8" cy="8" r="7" fill="#333" stroke="#ccc" /><circle cx="8" cy="8" r="4.500" fill="#e0202a" /></svg></TraySlot>
          <TraySlot $w={24}><svg width="14" height="14" viewBox="0 0 14 14" fill="none" stroke="#666"><path d="M8 2C11 3 12 6 12 10M8 5C10 6 10 8 10 10" /><circle cx="4" cy="10" r="3.500" fill="#d23b3b" stroke="none" /></svg></TraySlot>
          <TraySlot $w={32}><svg width="22" height="14" viewBox="0 0 22 14" fill="none" stroke="#ddd"><rect x=".5" y=".5" width="21" height="13" /><path d="M3 4H19M3 7H19M6 10.500H16" strokeDasharray="1.500 1" /></svg></TraySlot>
          <TraySlot $w={30} $fs={12}>ENG</TraySlot>
          <Clock>11:53 PM<br />01-14-2019</Clock>
          <TraySlot $w={38}><svg width="15" height="15" viewBox="0 0 15 15" fill="none" stroke="#eee"><path d="M.5 .5H14.500V11.500H10L7.500 14 5 11.500H.5Z" /></svg></TraySlot>
        </Tray>
      </Taskbar>

      <Menu $x={759} $y={133} $w={170} $h={279}>
        {leftMenu.map((m, i) => (
          <BigItem key={i} $on={m.on} $line={m.line} $pl={8} $gap={7} $h={i === 1 ? 43 : 41.3}>
            {m.icons ? (
              <svg width="30" height="29" viewBox="0 0 30 29" fill="none">
                <Grid fills={[]} />
                <circle cx="4" cy="3.500" r="1.200" fill="#2b8fc9" />
                <circle cx="4" cy="10" r="1.200" fill="#d23b3b" />
                <circle cx="4" cy="16.500" r="1.200" fill="#2b8fc9" />
              </svg>
            ) : (
              <MenuGlyph fills={m.f} badge={m.b} />
            )}
            <span>{m.l}</span>
            <Arrow />
          </BigItem>
        ))}
        <MenuRule $m="2px 0 0" />
        <SmallItem>
          <Tiny fills={[[0, 0, 3, 3, '#fbdca6']]} />
          <span><u>N</u>ew Rule...</span>
        </SmallItem>
        <SmallItem>
          <Tiny fills={[[0, 0, 3, 3, '#fbdca6']]} extra={<path d="M9 14 14 9 16 11 11 15Z" fill="#c07fd0" stroke="#8c4aa0" />} />
          <span><u>C</u>lear Rules</span>
          <Arrow />
        </SmallItem>
        <SmallItem>
          <Tiny fills={[[1, 1, 2, 2, '#fbdca6']]} />
          <span>Manage <u>R</u>ules...</span>
        </SmallItem>
      </Menu>

      <Menu $x={930} $y={134} $w={170} $h={315} $pt={2}>
        {rightMenu.map((m, i) => (
          <BigItem key={i} $on={m.on} $pl={8} $gap={6}>
            <MenuGlyph fills={m.f} badge={m.b} date={m.date} />
            <span>{m.l}</span>
          </BigItem>
        ))}
        <MenuRule />
        <MoreRules><u>M</u>ore Rules...</MoreRules>
      </Menu>

      <Spot />
      <Pointer width="18" height="30" viewBox="0 0 18 30">
        <path d="M1 1V23L6.500 18 10.500 28 14.500 26.500 10.500 17H17Z" fill="#fff" stroke="#222" strokeWidth="1.200" />
      </Pointer>
    </Root>
  )
}

export default App
